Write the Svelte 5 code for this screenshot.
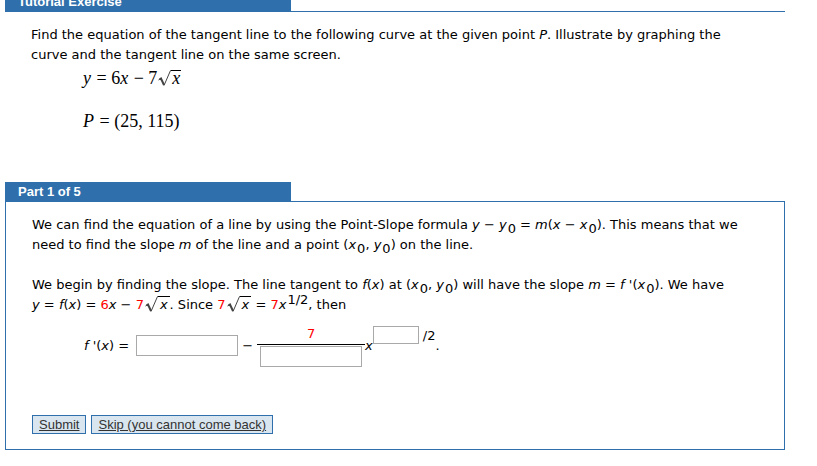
<script>
  let constant = $state('');
  let denominator = $state('');
  let exponent = $state('');
</script>

{#snippet root(cls)}
  <span class="root {cls}">
    <svg viewBox="0 0 13 16" preserveAspectRatio="none" aria-hidden="true">
      <path d="M1.5 9.5 L3 8.5 L6 15" class="thick" />
      <path d="M0.5 10 L3 8.5 M6 15.5 L12.5 0.5 H13" class="thin" />
    </svg><i>x</i>
  </span>
{/snippet}

{#snippet sub(letter)}<i>{letter}</i><sub>0</sub>{/snippet}

<main>
  <section class="exercise">
    <h2>Tutorial Exercise</h2>
    <div class="panel open">
      <p>
        Find the equation of the tangent line to the following curve at the given point <i>P</i>. Illustrate by graphing the curve and the tangent line on the same screen.
      </p>
      <div class="math"><i>y</i> = 6<i>x</i> − 7{@render root('tex')}</div>
      <div class="math"><i>P</i> = (25, 115)</div>
    </div>
  </section>

  <section>
    <h2>Part 1 of 5</h2>
    <form class="panel" onsubmit={(e) => e.preventDefault()}>
      <p>
        We can find the equation of a line by using the Point-Slope formula <i>y</i> − {@render sub('y')} = <i>m</i>(<i>x</i> − {@render sub('x')}). This means that we need to find the slope <i>m</i> of the line and a point ({@render sub('x')}, {@render sub('y')}) on the line.
      </p>
      <p class="second">
        We begin by finding the slope. The line tangent to <i>f</i>(<i>x</i>) at ({@render sub('x')}, {@render sub('y')}) will have the slope <i>m</i> = <i>f</i> '({@render sub('x')}). We have<br />
        <i>y</i> = <i>f</i>(<i>x</i>) = <b>6</b><i>x</i> − <b>7</b>{@render root('text')}. Since <b>7</b>{@render root('text')} = <b>7</b><i>x</i><sup>1/2</sup>, then
      </p>
      <div class="answer">
        <span class="base"><i>f</i> '(<i>x</i>) =</span>
        <input class="first" aria-label="First term" bind:value={constant} />
        <span class="base minus">−</span>
        <span class="fraction">
          <b>7</b>
          <input aria-label="Denominator" bind:value={denominator} />
        </span>
        <i class="base">x</i>
        <input class="exponent" aria-label="Exponent numerator" bind:value={exponent} />
        <span class="over">/2</span>
        <span class="base">.</span>
      </div>
      <div class="actions">
        <button type="submit">Submit</button>
        <button type="button">Skip (you cannot come back)</button>
      </div>
    </form>
  </section>
</main>

<style>
  :global(body) {
    background: #fff;
  }
  main {
    overflow: hidden;
    padding: 0 32px 16px 5px;
    font: 13px/20px Verdana, 'DejaVu Sans', sans-serif;
    color: #000;
  }
  .exercise {
    margin-top: -8px;
  }
  h2 {
    box-sizing: border-box;
    width: 286px;
    height: 19px;
    margin: 0;
    padding-left: 13px;
    background: #2f6fab;
    color: #fff;
    font: bold 13px/19px 'Liberation Sans', Arial, sans-serif;
  }
  .panel {
    padding: 13px 32px 15px 26px;
    border: 1px solid #2f6fab;
  }
  .open {
    border-width: 1px 0 0;
    padding-bottom: 48px;
  }
  p {
    margin: 0;
  }
  .second {
    margin-top: 20px;
  }
  b {
    font-weight: normal;
    color: #f00;
  }
  sub,
  sup {
    margin-left: 1px;
    font-size: 13px;
    line-height: 0;
  }
  sub {
    vertical-align: -4px;
  }
  sup {
    vertical-align: 5px;
  }
  .math {
    padding-left: 52px;
    font: 18px/26px 'Liberation Serif', 'Times New Roman', serif;
  }
  .math i {
    margin-right: 1px;
  }
  .math + .math {
    margin-top: 17px;
  }
  .root {
    display: inline-flex;
    align-items: baseline;
    margin-left: 1px;
    line-height: 15px;
  }
  .root svg {
    align-self: stretch;
    width: 13px;
    height: 16px;
    fill: none;
    stroke: #444;
  }
  .thick {
    stroke-width: 2;
  }
  .thin {
    stroke-width: 1;
  }
  .root i {
    border-top: 1px solid #000;
    padding: 0 2px;
  }
  .tex {
    line-height: 14px;
  }
  .tex i {
    padding: 0 1px;
  }
  .answer {
    display: flex;
    align-items: flex-start;
    padding-left: 52px;
    margin-top: 11px;
  }
  .base {
    margin-top: 10px;
  }
  input {
    box-sizing: border-box;
    width: 102px;
    height: 21px;
    margin: 0;
    padding: 1px 3px;
    border: 1px solid #a9a9a9;
    background: #fff;
    font: inherit;
  }
  .first {
    margin: 9px 4px 0 7px;
  }
  .minus {
    margin-right: 4px;
  }
  .fraction {
    display: flex;
    flex-direction: column;
    align-items: center;
    width: 108px;
  }
  .fraction b {
    width: 100%;
    height: 18px;
    line-height: 16px;
    border-bottom: 1px solid #000;
    margin-bottom: 1px;
    text-align: center;
  }
  .exponent {
    width: 46px;
    height: 18px;
  }
  .over {
    margin-left: 4px;
  }
  .actions {
    display: flex;
    gap: 5px;
    margin-top: 48px;
  }
  button {
    height: 19px;
    padding: 0 6px;
    border: 1px solid #2f6fab;
    background: #dae6ef;
    color: #333;
    font: 13px/17px 'Liberation Sans', Arial, sans-serif;
    text-decoration: underline;
    cursor: pointer;
  }
</style>
